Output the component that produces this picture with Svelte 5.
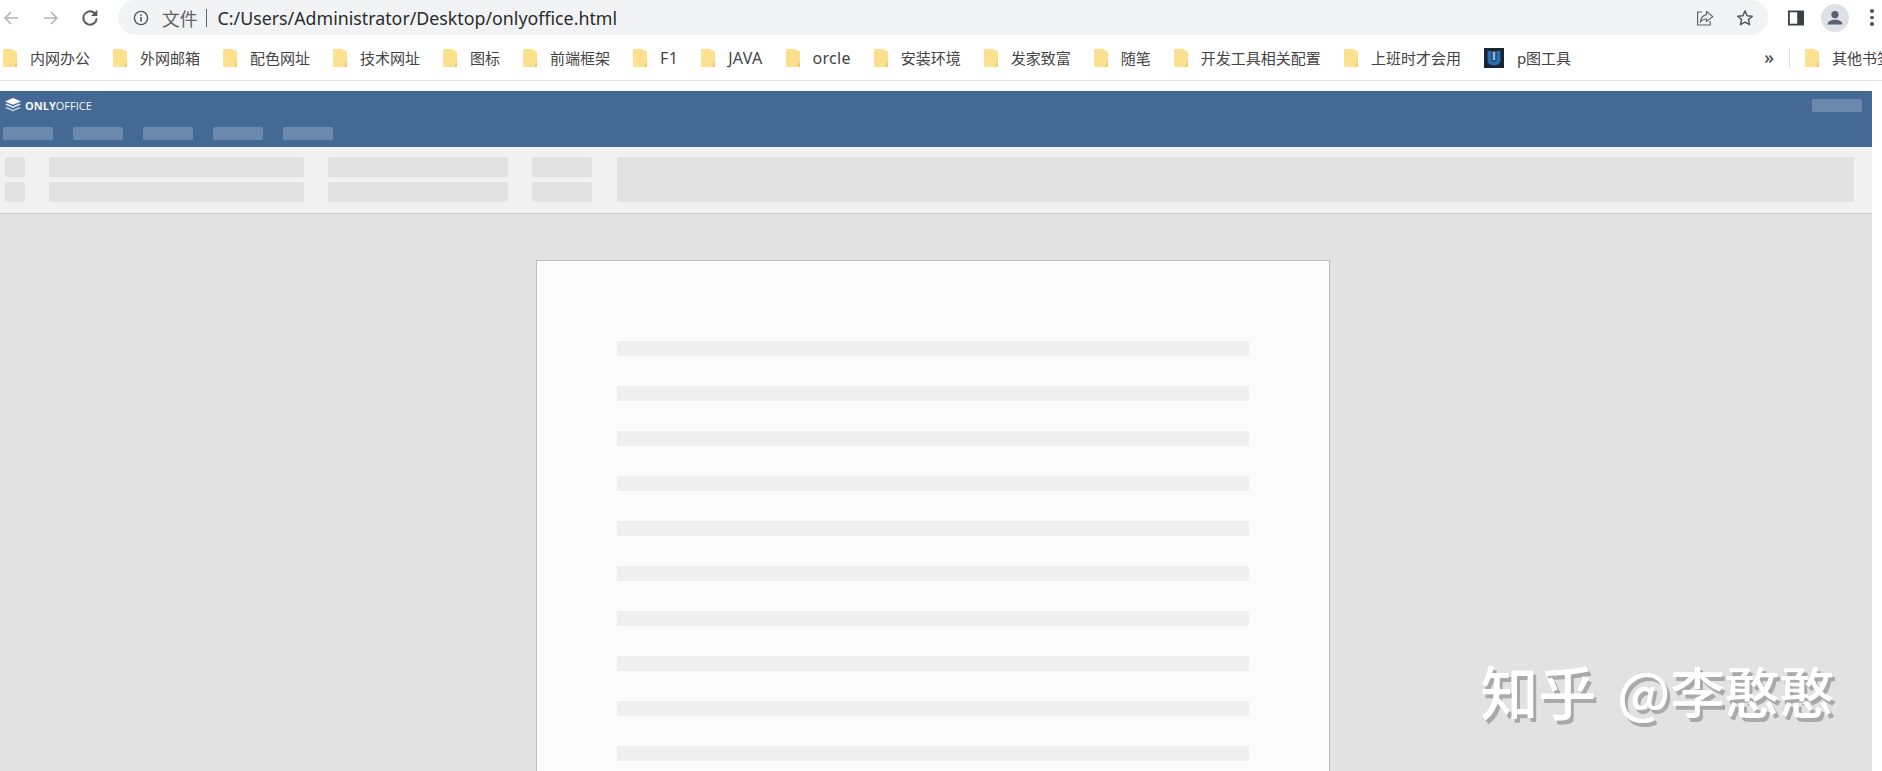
<script>
	const bookmarks = [
		'内网办公', '外网邮箱', '配色网址', '技术网址', '图标', '前端框架', 'F1', 'JAVA', 'orcle',
		'安装环境', '发家致富', '随笔', '开发工具相关配置', '上班时才会用'
	];
	const menuItems = [1, 2, 3, 4, 5];
	const docLines = Array.from({ length: 10 }, (_, i) => i);

	// latin labels render a touch larger than the CJK ones in the bar
	const isLatin = (label) => /^[\x00-\x7f]+$/.test(label);
</script>

{#snippet folder()}
	<svg class="folder" viewBox="0 0 14 18" width="14" height="18" aria-hidden="true">
		<path d="M1.5 0H9l2 1.5h1.5A1.5 1.5 0 0 1 14 3v13.5a1.5 1.5 0 0 1-1.5 1.5h-11A1.5 1.5 0 0 1 0 16.5v-15A1.5 1.5 0 0 1 1.5 0z" fill="#fde08d" />
		<path d="M11.6 18c.3-1.8.6-3 1.2-4l1.2-.6V16.5a1.5 1.5 0 0 1-1.5 1.5z" fill="#efc65e" />
	</svg>
{/snippet}

<div class="browser">
	<div class="topbar">
		<div class="nav">
			<svg class="nav-icon" viewBox="0 0 16 16" width="16" height="16"><path d="M15 8H2M8 2 2 8l6 6" fill="none" stroke="#b0b2b4" stroke-width="1.5" /></svg>
			<svg class="nav-icon forward" viewBox="0 0 16 16" width="16" height="16"><path d="M1 8h13M8 2l6 6-6 6" fill="none" stroke="#b0b2b4" stroke-width="1.5" /></svg>
			<svg class="nav-icon reload" viewBox="0 0 18 18" width="20" height="20"><path d="M15 9.2A6 6 0 1 1 13.2 4.7" fill="none" stroke="#55585c" stroke-width="1.7" /><path d="M15.6 1.6v5.6H10z" fill="#55585c" /></svg>
		</div>
		<div class="omnibox">
			<svg class="info" viewBox="0 0 16 16" width="16" height="16"><circle cx="8" cy="8" r="6.6" fill="none" stroke="#55585c" stroke-width="1.4" /><rect x="7.2" y="7" width="1.6" height="4.6" fill="#55585c" /><rect x="7.2" y="4.3" width="1.6" height="1.6" fill="#55585c" /></svg>
			<span class="scheme">文件</span>
			<span class="sep"></span>
			<span class="url">C:/Users/Administrator/Desktop/onlyoffice.html</span>
			<svg class="share" viewBox="0 0 18 18" width="18" height="18"><path d="M6 3H1.6v13h12.6v-4" fill="none" stroke="#5f6368" stroke-width="1.2" /><path d="M10.5 2.5 16.8 7.6l-6.3 5V10C7.6 10 5.6 11 4.4 13.2 4.8 9.4 7 6.3 10.5 5.6z" fill="none" stroke="#5f6368" stroke-width="1.2" stroke-linejoin="round" /></svg>
			<svg class="star" viewBox="0 0 18 18" width="18" height="18"><path d="M9 1.9l2.1 4.8 5.2.5-3.9 3.4 1.2 5.1L9 13.1l-4.6 2.6 1.2-5.1-3.9-3.4 5.2-.5z" fill="none" stroke="#55585c" stroke-width="1.5" stroke-linejoin="round" /></svg>
		</div>
		<svg class="panel" viewBox="0 0 18 18" width="18" height="18"><rect x="1" y="1.5" width="16" height="15" fill="#3c4043" /><rect x="2.8" y="3.3" width="7.4" height="11.4" fill="#fff" /></svg>
		<div class="avatar">
			<svg viewBox="0 0 28 28" width="28" height="28"><circle cx="14" cy="14" r="14" fill="#dee1e6" /><circle cx="14" cy="10.6" r="3.6" fill="#5a6173" /><path d="M6.6 20.4c0-3 3.6-4.6 7.4-4.6s7.4 1.6 7.4 4.6z" fill="#5a6173" /></svg>
		</div>
		<div class="dots"><i></i><i></i><i></i></div>
	</div>

	<div class="bookmarks">
		{#each bookmarks as label}
			<div class="bookmark">
				{@render folder()}
				<span class:latin={isLatin(label)}>{label}</span>
			</div>
		{/each}
		<div class="bookmark">
			<svg class="favicon" viewBox="0 0 20 20" width="20" height="20">
				<rect width="20" height="20" fill="#1b2634" />
				<path d="M3.6 3h4v9c0 2 4.8 2 4.8 0V3h4v9.6c0 6.4-12.8 6.4-12.8 0z" fill="#2a6db4" />
				<path d="M8.6 3.6h2.8v8.8H8.6z" fill="#7fb8e8" />
			</svg>
			<span>p图工具</span>
		</div>
		<span class="more">»</span>
		<span class="bar-sep"></span>
		<div class="bookmark last">
			{@render folder()}
			<span>其他书签</span>
		</div>
	</div>

	<div class="editor">
		<header class="title-area">
			<div class="title-row">
				<div class="logo">
					<svg viewBox="0 0 16 14" width="16" height="14">
						<path d="M8 0l8 3.4-8 3.4-8-3.4z" fill="#fff" />
						<path d="M2 5.6 8 8.2l6-2.6 2 1-8 3.4-8-3.4z" fill="#fff" opacity=".8" />
						<path d="M2 9 8 11.6 14 9l2 1-8 3.4L0 10z" fill="#fff" opacity=".6" />
					</svg>
					<span class="logo-text"><b>ONLY</b>OFFICE</span>
				</div>
				<div class="pill user"></div>
			</div>
			<div class="tabs">
				{#each menuItems as item (item)}
					<div class="pill"></div>
				{/each}
			</div>
		</header>

		<div class="toolbar">
			<div class="tool-group narrow"><div></div><div></div></div>
			<div class="tool-group wide"><div></div><div></div></div>
			<div class="tool-group mid"><div></div><div></div></div>
			<div class="tool-group small"><div></div><div></div></div>
			<div class="tool-fill"></div>
		</div>

		<main class="doc-area">
			<div class="page">
				{#each docLines as line (line)}
					<div class="line"></div>
				{/each}
			</div>
			<div class="watermark">
				<span class="wm-site">知乎</span>
				<span class="wm-name">@李憨憨</span>
			</div>
		</main>
	</div>
</div>

<style>
	:global(body) {
		margin: 0;
		background: #fff;
		overflow: hidden;
	}

	.browser {
		width: 1882px;
		height: 771px;
		overflow: hidden;
		display: flex;
		flex-direction: column;
		font-family: "Noto Sans", "Noto Sans CJK SC", sans-serif;
		color: #444;
	}

	.topbar {
		flex: none;
		height: 35px;
		display: flex;
		align-items: center;
	}

	.nav {
		width: 118px;
		flex: none;
		display: flex;
		align-items: center;
	}

	.nav-icon {
		margin-left: 3px;
		flex: none;
	}

	.nav-icon.forward {
		margin-left: 24px;
	}

	.nav-icon.reload {
		margin-left: 21px;
	}

	.omnibox {
		width: 1650px;
		height: 35px;
		flex: none;
		background: #f1f3f4;
		border-radius: 18px;
		display: flex;
		align-items: center;
		font-size: 17.8px;
	}

	.info {
		margin-left: 15px;
		flex: none;
	}

	.scheme {
		margin-left: 13px;
		color: #5f6368;
	}

	.sep {
		width: 1px;
		height: 18px;
		background: #5f6368;
		margin-left: 8px;
	}

	.url {
		margin-left: 11px;
		color: #2a2c2e;
		white-space: nowrap;
	}

	.share {
		margin-left: auto;
	}

	.star {
		margin-left: 22px;
		margin-right: 14px;
	}

	.panel {
		margin-left: 19px;
		flex: none;
	}

	.avatar {
		margin-left: 16px;
		height: 28px;
		flex: none;
	}

	.dots {
		margin-left: 21px;
		display: flex;
		flex-direction: column;
		gap: 3px;
	}

	.dots i {
		width: 3.5px;
		height: 3.5px;
		border-radius: 50%;
		background: #55585c;
	}

	.bookmarks {
		flex: none;
		height: 46px;
		box-sizing: border-box;
		border-bottom: 1px solid #dfe4ea;
		display: flex;
		align-items: center;
		padding-left: 3px;
		gap: 23px;
		font-size: 15px;
		white-space: nowrap;
	}

	.bookmark {
		display: flex;
		align-items: center;
		gap: 13px;
		flex: none;
	}

	.latin {
		font-size: 16px;
		letter-spacing: .3px;
	}

	.folder {
		flex: none;
	}

	.favicon {
		flex: none;
	}

	.more {
		flex: none;
		margin-left: 170px;
		font-size: 17px;
		font-weight: 600;
		color: #55585c;
	}

	.bar-sep {
		flex: none;
		width: 1px;
		height: 20px;
		background: #dfe1e5;
		margin-left: -8px;
	}

	.bookmark.last {
		margin-left: -8px;
	}

	.editor {
		flex: 1;
		min-height: 0;
		width: 1872px;
		margin-top: 10px;
		display: flex;
		flex-direction: column;
		position: relative;
	}

	.title-area {
		flex: none;
		height: 56px;
		background: #446995;
		display: flex;
		flex-direction: column;
	}

	.title-row {
		height: 36px;
		box-sizing: border-box;
		display: flex;
		align-items: center;
		justify-content: space-between;
		padding: 0 10px 8px 5px;
	}

	.logo {
		display: flex;
		align-items: center;
		gap: 4px;
		color: #fff;
		font-family: "Open Sans", sans-serif;
		font-size: 11px;
	}

	.logo-text {
		opacity: .95;
	}

	.logo-text b {
		font-weight: 700;
	}

	.pill {
		width: 50px;
		height: 13px;
		border-radius: 2px;
		background: #6a89ad;
	}

	.tabs {
		display: flex;
		gap: 20px;
		padding-left: 3px;
	}

	.toolbar {
		flex: none;
		height: 67px;
		box-sizing: border-box;
		background: #f1f1f1;
		border-bottom: 1px solid #ccc;
		display: flex;
		padding: 10px 18px 0 5px;
		gap: 24px;
	}

	.tool-group {
		display: flex;
		flex-direction: column;
		gap: 5px;
		flex: none;
	}

	.tool-group div {
		height: 20px;
		background: #e2e2e2;
		border-radius: 2px;
	}

	.narrow {
		width: 20px;
	}

	.wide {
		width: 255px;
	}

	.mid {
		width: 180px;
	}

	.small {
		width: 60px;
	}

	.tool-fill {
		flex: 1;
		height: 45px;
		margin-left: 1px;
		background: #e2e2e2;
		border-radius: 2px;
	}

	.doc-area {
		flex: 1;
		min-height: 0;
		background: #e2e2e2;
		overflow: hidden;
		padding-top: 46px;
		padding-left: 536px;
	}

	.page {
		width: 794px;
		height: 700px;
		box-sizing: border-box;
		background: #fbfbfb;
		border: 1px solid #bdbdbd;
		padding: 80px 80px 0;
		display: flex;
		flex-direction: column;
		gap: 30px;
	}

	.line {
		flex: none;
		height: 15px;
		background: #efefef;
	}

	.watermark {
		position: absolute;
		right: 38px;
		bottom: 52px;
		display: flex;
		align-items: center;
		gap: 21px;
		font-family: "Noto Sans CJK SC", sans-serif;
		font-weight: 500;
		line-height: 1;
		color: #fff;
		text-shadow: 3px 4px 0 #a9a9a9;
		white-space: nowrap;
	}

	.wm-site {
		font-size: 58px;
	}

	.wm-name {
		font-size: 54.6px;
	}
</style>
